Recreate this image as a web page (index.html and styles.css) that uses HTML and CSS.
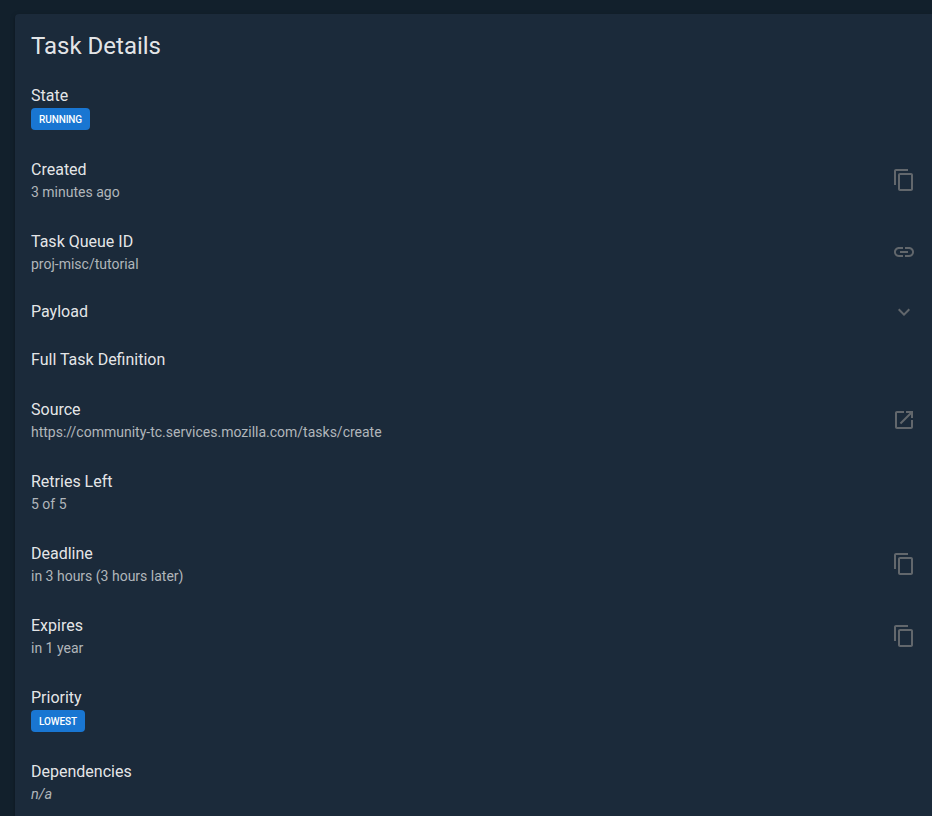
FILE: index.html
```html
<!DOCTYPE html>
<html lang="en">
<head>
<meta charset="utf-8">
<title>Task Details</title>
<link rel="stylesheet" href="styles.css">
</head>
<body>
<main class="card">
  <h1 class="title">Task Details</h1>
  <ul class="list">
    <li class="row row-chip"><div class="text"><div class="primary">State</div><div class="secondary"><span class="chip">RUNNING</span></div></div></li>
    <li class="row"><div class="text"><div class="primary">Created</div><div class="secondary">3 minutes ago</div></div>
      <svg class="icon" viewBox="0 0 24 24"><path d="M16 1H4c-1.1 0-2 .9-2 2v14h2V3h12V1zm3 4H8c-1.1 0-2 .9-2 2v14c0 1.1.9 2 2 2h11c1.1 0 2-.9 2-2V7c0-1.1-.9-2-2-2zm0 16H8V7h11v14z"/></svg></li>
    <li class="row"><div class="text"><div class="primary">Task Queue ID</div><div class="secondary">proj-misc/tutorial</div></div>
      <svg class="icon" viewBox="0 0 24 24"><path d="M3.9 12c0-1.71 1.39-3.1 3.1-3.1h4V7H7c-2.76 0-5 2.24-5 5s2.24 5 5 5h4v-1.9H7c-1.71 0-3.1-1.39-3.1-3.1zM8 13h8v-2H8v2zm9-6h-4v1.9h4c1.71 0 3.1 1.39 3.1 3.1s-1.39 3.1-3.1 3.1h-4V17h4c2.76 0 5-2.24 5-5s-2.24-5-5-5z"/></svg></li>
    <li class="row row-single"><div class="text"><div class="primary">Payload</div></div>
      <svg class="icon" viewBox="0 0 24 24"><path d="M16.59 8.59L12 13.17 7.41 8.59 6 10l6 6 6-6z"/></svg></li>
    <li class="row row-single"><div class="text"><div class="primary">Full Task Definition</div></div></li>
    <li class="row"><div class="text"><div class="primary">Source</div><div class="secondary">https://community-tc.services.mozilla.com/tasks/create</div></div>
      <svg class="icon" viewBox="0 0 24 24"><path d="M19 19H5V5h7V3H5c-1.11 0-2 .9-2 2v14c0 1.1.89 2 2 2h14c1.1 0 2-.9 2-2v-7h-2v7zM14 3v2h3.59l-9.83 9.83 1.41 1.41L19 6.41V10h2V3h-7z"/></svg></li>
    <li class="row"><div class="text"><div class="primary">Retries Left</div><div class="secondary">5 of 5</div></div></li>
    <li class="row"><div class="text"><div class="primary">Deadline</div><div class="secondary">in 3 hours (3 hours later)</div></div>
      <svg class="icon" viewBox="0 0 24 24"><path d="M16 1H4c-1.1 0-2 .9-2 2v14h2V3h12V1zm3 4H8c-1.1 0-2 .9-2 2v14c0 1.1.9 2 2 2h11c1.1 0 2-.9 2-2V7c0-1.1-.9-2-2-2zm0 16H8V7h11v14z"/></svg></li>
    <li class="row"><div class="text"><div class="primary">Expires</div><div class="secondary">in 1 year</div></div>
      <svg class="icon" viewBox="0 0 24 24"><path d="M16 1H4c-1.1 0-2 .9-2 2v14h2V3h12V1zm3 4H8c-1.1 0-2 .9-2 2v14c0 1.1.9 2 2 2h11c1.1 0 2-.9 2-2V7c0-1.1-.9-2-2-2zm0 16H8V7h11v14z"/></svg></li>
    <li class="row row-chip"><div class="text"><div class="primary">Priority</div><div class="secondary"><span class="chip">LOWEST</span></div></div></li>
    <li class="row"><div class="text"><div class="primary">Dependencies</div><div class="secondary"><em class="none">n/a</em></div></div></li>
  </ul>
</main>
</body>
</html>
```
FILE: styles.css
```css
* { box-sizing: border-box; }
html, body { margin: 0; height: 100%; overflow: hidden; }
body {
  background: #12202c;
  font-family: Roboto, "Liberation Sans", sans-serif;
  padding: 14px 0 0 15px;
}
.card {
  background: #1b2a3a;
  border-radius: 4px 0 0 0;
  box-shadow: 0 1px 5px rgba(0,0,0,.2), 0 2px 2px rgba(0,0,0,.14), 0 3px 1px -2px rgba(0,0,0,.12);
  height: 900px;
  color: rgba(255,255,255,.9);
}
.title {
  margin: 0;
  padding: 16px 16px 0;
  font-size: 24px;
  font-weight: 400;
  line-height: 32px;
  height: 57px;
}
.list { list-style: none; margin: 0; padding: 0; }
.row {
  display: flex;
  align-items: center;
  justify-content: space-between;
  height: 72px;
  padding: 13px 16px 0;
}
.row-chip { height: 74px; }
.row-single { height: 48px; padding-top: 11px; align-items: flex-start; }
.text { min-width: 0; align-self: flex-start; }
.primary { font-size: 16px; line-height: 24px; }
.secondary { font-size: 14px; line-height: 21px; color: #b1b6bb; }
.row-chip .secondary { line-height: 0; }
.none { font-size: 14.5px; }
.chip {
  display: inline-flex;
  align-items: center;
  height: 22px;
  padding: 1px 8px 0;
  border-radius: 4px;
  background: #1976d2;
  color: #fff;
  font-size: 10px;
  font-weight: 500;
  letter-spacing: -0.1px;
  line-height: 21px;
}
.icon {
  width: 24px;
  height: 24px;
  flex: none;
  fill: #62676c;
  align-self: flex-start;
  margin-top: 10px;
}
.row-single .icon { margin-top: 0; }
```
